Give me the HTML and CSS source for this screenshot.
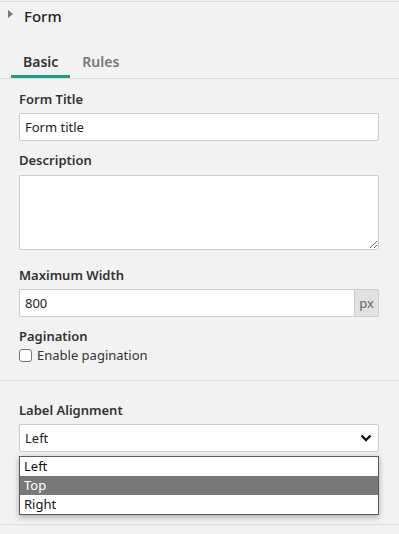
FILE: index.html
```html
<!DOCTYPE html>
<html lang="en">
  <head>
    <meta charset="UTF-8" />
    <meta name="viewport" content="width=device-width, initial-scale=1.0" />
    <title>Form Settings</title>
    <link rel="stylesheet" href="styles.css">
  </head>
  <body>
    <div class="panel">
      <div class="panel-header">
        <span class="caret"></span>
        <span class="panel-title">Form</span>
      </div>
      <div class="tabs">
        <div class="tab active">Basic</div>
        <div class="tab">Rules</div>
      </div>
      <div class="section">
        <div class="field">
          <label class="field-label">Form Title</label>
          <input class="text-input" type="text" value="Form title" />
        </div>
        <div class="field wide">
          <label class="field-label loose">Description</label>
          <textarea class="text-area"></textarea>
        </div>
        <div class="field">
          <label class="field-label">Maximum Width</label>
          <div class="input-group">
            <input class="text-input" type="text" value="800" />
            <span class="addon">px</span>
          </div>
        </div>
        <div class="field last">
          <label class="field-label tight">Pagination</label>
          <label class="check-row">
            <span class="checkbox"></span>
            Enable pagination
          </label>
        </div>
      </div>
      <div class="section second">
        <div class="field last">
          <label class="field-label">Label Alignment</label>
          <div class="select-wrap">
            <div class="select">
              <span>Left</span>
              <svg width="12" height="8" viewBox="0 0 12 8">
                <path d="M1.5 1.5 L6 6 L10.5 1.5" fill="none" stroke="#111" stroke-width="2.4" />
              </svg>
            </div>
            <ul class="dropdown">
              <li>Left</li>
              <li class="hover">Top</li>
              <li>Right</li>
            </ul>
          </div>
        </div>
      </div>
    </div>
  </body>
</html>
```

FILE: styles.css
```css
body {
  margin: 0;
  background: #f2f2f2;
  font-family: "Noto Sans", "Open Sans", sans-serif;
  font-size: 13px;
  color: #222;
}
.panel {
  margin-top: 1px;
  border-top: 1px solid #dcdcdc;
}
.panel-header {
  display: flex;
  align-items: center;
  height: 30px;
  padding-left: 8px;
}
.caret {
  width: 0;
  height: 0;
  border-top: 4px solid transparent;
  border-bottom: 4px solid transparent;
  border-left: 5px solid #777;
  margin-top: -6px;
}
.panel-title {
  margin-left: 11px;
  margin-top: -2px;
  font-size: 15px;
  font-weight: 500;
  color: #222;
}
.tabs {
  display: flex;
  padding: 17px 0 0 11px;
  border-bottom: 1px solid #dcdcdc;
}
.tab {
  padding: 0 12px;
  height: 29px;
  line-height: 26px;
  font-size: 14px;
  font-weight: 600;
  color: #777;
  border-bottom: 3px solid transparent;
  box-sizing: border-box;
}
.tab.active {
  color: #333;
  border-bottom-color: #12a589;
}
.section {
  padding: 11px 20px 16px 19px;
  border-bottom: 1px solid #dcdcdc;
}
.section.second {
  padding-top: 20px;
  padding-bottom: 72px;
}
.field {
  display: flex;
  flex-direction: column;
  margin-bottom: 10px;
}
.field.wide {
  margin-bottom: 16px;
}
.field.last {
  margin-bottom: 0;
}
.field-label {
  font-weight: 600;
  line-height: 18px;
  margin-bottom: 5px;
  color: #333;
}
.field-label.loose {
  margin-bottom: 6px;
}
.field-label.tight {
  margin-bottom: 1px;
}
.text-input,
.text-area,
.select {
  font-family: inherit;
  font-size: 13px;
  color: #222;
  background: #fff;
  border: 1px solid #ccc;
  border-radius: 2px;
  box-sizing: border-box;
  outline: none;
}
.text-input {
  height: 28px;
  padding: 0 6px 0 5px;
  width: 100%;
}
.text-area {
  height: 75px;
  resize: vertical;
  display: block;
}
.input-group {
  display: flex;
}
.input-group .text-input {
  flex: 1;
  border-right: none;
  border-radius: 2px 0 0 2px;
}
.addon {
  width: 25px;
  height: 28px;
  line-height: 26px;
  box-sizing: border-box;
  border: 1px solid #ccc;
  border-radius: 0 2px 2px 0;
  background: #e2e2e2;
  color: #666;
  text-align: center;
}
.check-row {
  display: flex;
  align-items: center;
  gap: 5px;
  line-height: 18px;
  color: #333;
}
.checkbox {
  width: 13px;
  height: 13px;
  box-sizing: border-box;
  border: 1px solid #767676;
  border-radius: 3px;
  background: #fff;
}
.select-wrap {
  position: relative;
}
.select {
  height: 28px;
  display: flex;
  align-items: center;
  justify-content: space-between;
  padding: 0 6px 0 5px;
}
.dropdown {
  position: absolute;
  top: 32px;
  left: 0;
  right: 0;
  margin: 0;
  padding: 0;
  list-style: none;
  background: #fff;
  border: 1px solid #5a5a5a;
  box-shadow: 0 2px 6px rgba(0, 0, 0, 0.3);
}
.dropdown li {
  height: 19px;
  line-height: 19px;
  padding-left: 4px;
  color: #111;
}
.dropdown li.hover {
  background: #787878;
  color: #fff;
}
```
